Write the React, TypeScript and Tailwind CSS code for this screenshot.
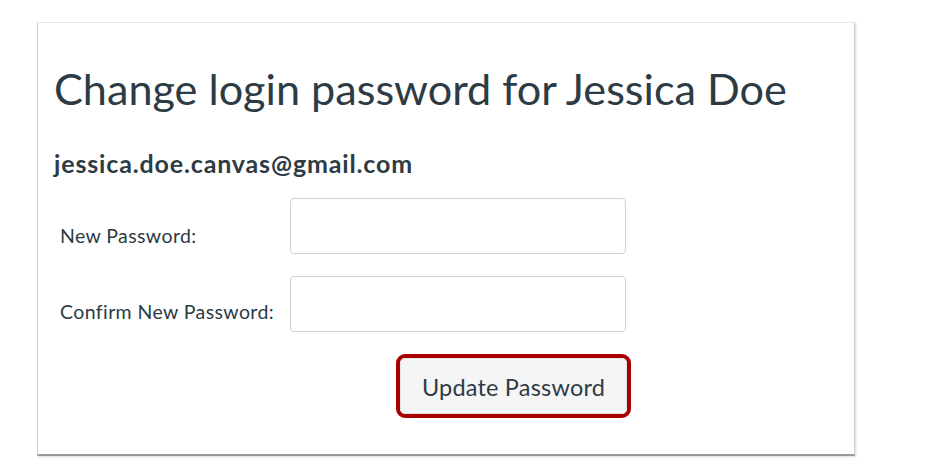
import React from "react"

const App = () => {
  return (
    <div className="min-h-screen w-[945px] h-[472px] bg-white pl-[37px] pt-[22px] font-['Lato','Liberation_Sans',sans-serif] text-[#2d3b45]">
      <div className="w-[818px] h-[434px] bg-white border border-[#e6e6e6] border-l-[#cfcfcf] border-r-[#cfcfcf] border-b-2 border-b-[#9a9a9a] shadow-[1px_1px_2px_rgba(0,0,0,0.15)] pl-[16px]">
        <h1 className="mt-[39px] text-[43.2px] leading-[52px] font-normal">Change login password for Jessica Doe</h1>
        <div className="mt-[34px] text-[25px] leading-[30px] font-bold tracking-[0.85px]">jessica.doe.canvas@gmail.com</div>
        <div className="mt-[20px] flex flex-col gap-[22px] pl-[6px]">
          <div className="flex items-center">
            <label className="w-[230px] text-[19.5px] tracking-[0.4px] pt-[20px]">New Password:</label>
            <input type="password" className="w-[336px] h-[56px] rounded-[4px] border border-[#cdd2d5] bg-white outline-none" />
          </div>
          <div className="flex items-center">
            <label className="w-[230px] text-[19.5px] tracking-[0.4px] pt-[16px]">Confirm New Password:</label>
            <input type="password" className="w-[336px] h-[56px] rounded-[4px] border border-[#cdd2d5] bg-white outline-none" />
          </div>
        </div>
        <div className="mt-[22px] pl-[342px]">
          <div className="inline-block rounded-[9px] border-[4px] border-[#a80000] w-[235px] h-[64px]">
            <button className="w-full h-full pt-[3px] rounded-[5px] bg-[#f5f5f5] border border-[#e2e2e2] text-[23.5px] tracking-[0.2px] text-[#2d3b45]">
              Update Password
            </button>
          </div>
        </div>
      </div>
    </div>
  )
}

export default App
